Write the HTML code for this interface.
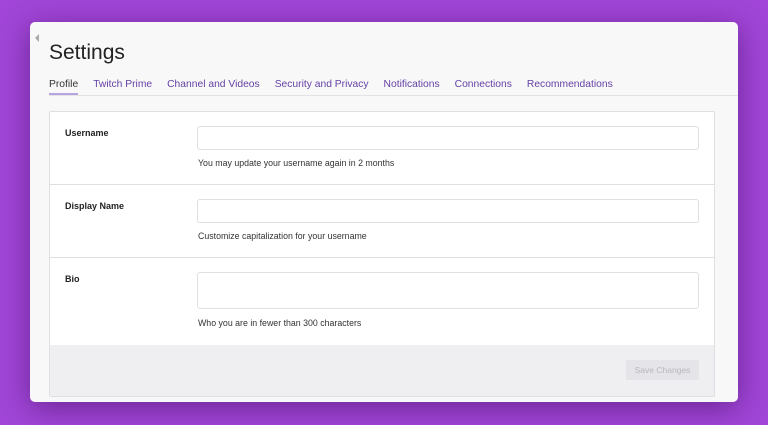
<!DOCTYPE html>
<html><head><style>
body{margin:0;width:768px;height:425px;background:#a146d8;font-family:"Liberation Sans",sans-serif;overflow:hidden;position:relative}
.win{position:absolute;left:30px;top:22px;width:708px;height:380px;background:#f8f8f9;border-radius:5px;box-shadow:0 6px 30px rgba(60,10,90,.55)}
.arr{position:absolute;left:5px;top:12px;width:0;height:0;border-top:4px solid transparent;border-bottom:4px solid transparent;border-right:4px solid #aaa}
h1{position:absolute;left:19px;top:19px;margin:0;font-weight:normal;font-size:21px;color:#222}
.tabs{position:absolute;left:19px;top:57px;font-size:10.3px;color:#6441a4;white-space:nowrap}
.tabs span{margin-right:15px;display:inline-block;padding-bottom:3px}
.tabs span.a{color:#333;border-bottom:2px solid #b9a3e3}
.line{position:absolute;left:19px;right:0;top:73px;height:1px;background:#e3e3e6}
.panel{position:absolute;left:19px;top:89px;width:664px;height:284px;background:#fff;border:1px solid #dedee3;border-radius:2px}
.row{position:absolute;left:0;right:0;border-bottom:1px solid #dedee3}
.lab{position:absolute;left:15px;font-size:9px;font-weight:bold;color:#222}
.inp{position:absolute;left:147px;width:500px;border:1px solid #dedee3;border-radius:3px;background:#fff}
.hint{position:absolute;left:148px;font-size:8.8px;color:#333}
.foot{position:absolute;left:0;right:0;top:233px;bottom:0;background:#efeef1}
.btn{position:absolute;right:15px;top:15px;width:73px;height:20px;background:#e5e4e8;border-radius:2px;color:#b9b7bf;font-size:8.5px;text-align:center;line-height:20px}
</style></head><body>
<div class="win">
<div class="arr"></div>
<h1>Settings</h1>
<div class="tabs"><span class="a">Profile</span><span>Twitch Prime</span><span>Channel and Videos</span><span>Security and Privacy</span><span>Notifications</span><span>Connections</span><span>Recommendations</span></div>
<div class="line"></div>
<div class="panel">
<div class="row" style="top:0;height:72px"><div class="lab" style="top:16px">Username</div><div class="inp" style="top:14px;height:22px"></div><div class="hint" style="top:46px">You may update your username again in 2 months</div></div>
<div class="row" style="top:73px;height:72px"><div class="lab" style="top:16px">Display Name</div><div class="inp" style="top:14px;height:22px"></div><div class="hint" style="top:46px">Customize capitalization for your username</div></div>
<div class="row" style="top:146px;height:86px;border:none"><div class="lab" style="top:16px">Bio</div><div class="inp" style="top:14px;height:35px"></div><div class="hint" style="top:60px">Who you are in fewer than 300 characters</div></div>
<div class="foot"><div class="btn">Save Changes</div></div>
</div>
</div>
</body></html>
